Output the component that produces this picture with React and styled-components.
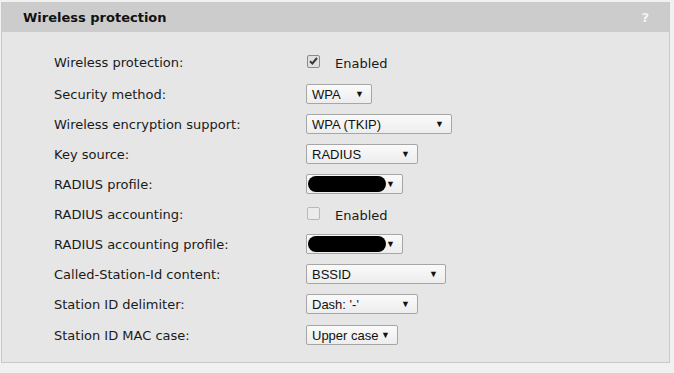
import styled, { createGlobalStyle } from "styled-components";

const GlobalStyle = createGlobalStyle`
  html, body {
    margin: 0;
    padding: 0;
    background: #f1f1f1;
  }
`;

const rows = [
  { label: "Wireless protection:", type: "check", checked: true },
  { label: "Security method:", type: "select", value: "WPA", width: 66 },
  { label: "Wireless encryption support:", type: "select", value: "WPA (TKIP)", width: 146 },
  { label: "Key source:", type: "select", value: "RADIUS", width: 112 },
  { label: "RADIUS profile:", type: "select", hidden: true, width: 97 },
  { label: "RADIUS accounting:", type: "check", checked: false },
  { label: "RADIUS accounting profile:", type: "select", hidden: true, width: 97 },
  { label: "Called-Station-Id content:", type: "select", value: "BSSID", width: 140 },
  { label: "Station ID delimiter:", type: "select", value: "Dash: '-'", width: 112 },
  { label: "Station ID MAC case:", type: "select", value: "Upper case", width: 92 },
];

function App() {
  return (
    <>
      <GlobalStyle />
      <Panel>
        <Header>
          <Title>Wireless protection</Title>
          <Help>?</Help>
        </Header>
        <Body>
          {rows.map((r) => (
            <Row key={r.label}>
              <Label>{r.label}</Label>
              {r.type === "check" ? (
                <CheckWrap>
                  <Box checked={r.checked}>
                    {r.checked && (
                      <svg width="9" height="8" viewBox="0 0 9 8">
                        <path d="M1 4.2 L3.4 6.5 L8 1" stroke="#3a3a3a" strokeWidth="2" fill="none" />
                      </svg>
                    )}
                  </Box>
                  <CheckText>Enabled</CheckText>
                </CheckWrap>
              ) : (
                <Select w={r.width}>
                  {r.hidden ? <Redacted /> : <span>{r.value}</span>}
                  <Arrow>▼</Arrow>
                </Select>
              )}
            </Row>
          ))}
        </Body>
      </Panel>
    </>
  );
}

export default App;

const Panel = styled.div`
  margin: 2px 0 0 1px;
  width: 667px;
  height: 360px;
  background: #e6e6e6;
  border: 1px solid #c9c9c9;
  border-top: none;
  box-sizing: content-box;
`;

const Header = styled.div`
  height: 30px;
  background: #cccccc;
  display: flex;
  align-items: center;
  justify-content: space-between;
  padding: 0 20px 0 21px;
`;

const Title = styled.div`
  font-family: "DejaVu Sans", sans-serif;
  font-weight: bold;
  font-size: 13px;
  color: #111;
`;

const Help = styled.div`
  font-family: "DejaVu Sans", sans-serif;
  font-weight: bold;
  font-size: 13px;
  color: #f4f4f4;
`;

const Body = styled.div`
  padding: 20px 0 0 52px;
  display: flex;
  flex-direction: column;
  gap: 10px;
`;

const Row = styled.div`
  display: grid;
  grid-template-columns: 252px auto;
  align-items: center;
  height: 20px;
  &:nth-child(2) {
    margin-top: 2px;
  }
  &:last-child {
    margin-top: 1px;
  }
`;

const Label = styled.div`
  font-family: "DejaVu Sans", Verdana, sans-serif;
  font-size: 13px;
  color: #1a1a1a;
`;

const CheckWrap = styled.div`
  display: flex;
  align-items: center;
  margin-top: -2px;
`;

const Box = styled.div`
  width: 11px;
  height: 11px;
  margin-left: 1px;
  border: 1px solid ${(p) => (p.checked ? "#8a8a8a" : "#b8b8b8")};
  border-radius: 2px;
  background: ${(p) => (p.checked ? "#e0e0e0" : "#ebebeb")};
  display: flex;
  align-items: center;
  justify-content: center;
`;

const CheckText = styled.span`
  margin-left: 15px;
  font-family: "DejaVu Sans", Verdana, sans-serif;
  font-size: 13px;
  color: #1a1a1a;
  position: relative;
  top: 2px;
`;

const Select = styled.div`
  width: ${(p) => p.w}px;
  height: 20px;
  box-sizing: border-box;
  border: 1px solid #a6a6a6;
  border-radius: 2px;
  background: linear-gradient(#fafafa, #ededed);
  display: flex;
  align-items: center;
  justify-content: space-between;
  padding: 0 7px 0 5px;
  font-family: "Liberation Sans", Arial, sans-serif;
  font-size: 13px;
  color: #111;
`;

const Redacted = styled.span`
  display: block;
  width: 78px;
  height: 16px;
  margin-left: -4px;
  background: #000;
  border-radius: 8px;
`;

const Arrow = styled.span`
  font-size: 9px;
  color: #111;
`;
